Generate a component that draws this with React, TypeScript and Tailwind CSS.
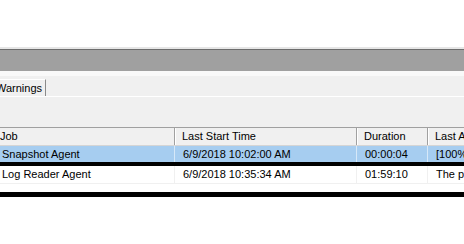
import React from 'react';

const COLS = [
  { label: 'Job', w: 'w-[181px]' },
  { label: 'Last Start Time', w: 'w-[182px]' },
  { label: 'Duration', w: 'w-[71px]' },
  { label: 'Last Action', w: 'w-[120px]' },
];

const ROWS = [
  ['Snapshot Agent', '6/9/2018 10:02:00 AM', '00:00:04', '[100%] A snapshot of 12 article(s) was generated.'],
  ['Log Reader Agent', '6/9/2018 10:35:34 AM', '01:59:10', 'The process is running and is waiting for a response.'],
];

export default function App() {
  return (
    <div className="w-[464px] h-[244px] overflow-hidden bg-white text-[11px] text-black font-['Liberation_Sans',Arial,sans-serif]">
      {/* top pane */}
      <div className="h-[47px] bg-white" />
      <div className="h-[2px] bg-[#e6e6e6]" />
      <div className="h-[1px] bg-[#6d6d6d]" />
      <div className="h-[21px] bg-[#a0a0a0]" />
      <div className="h-[5px] bg-[#f9f9f9]" />

      {/* tab strip */}
      <div className="h-[20px] bg-[#f0f0f0] flex items-end">
        <div className="ml-[-6px] h-[17px] w-[52px] bg-[#f0f0f0] border-t border-l border-white border-r border-r-[#8a8a8a] flex items-center pl-[1px] leading-none">
          Warnings
        </div>
      </div>
      <div className="h-[1px] bg-white" />
      <div className="h-[30px] bg-[#f0f0f0]" />

      {/* grid */}
      <div className="ml-[-6px]">
        <div className="flex h-[19px] bg-[#f0f0f0] border-t border-[#a0a0a0] border-b border-b-[#d5d5d5]">
          {COLS.map((c, i) => (
            <div
              key={c.label}
              className={`${c.w} shrink-0 flex items-center pl-[6px] whitespace-nowrap overflow-hidden border-r border-r-[#a0a0a0] ${i > 0 ? 'border-l border-l-white' : ''}`}
            >
              {c.label}
            </div>
          ))}
        </div>

        <div className="flex h-[16px] bg-[#a6cdf0]">
          {COLS.map((c, i) => (
            <div
              key={c.label}
              className={`${c.w} shrink-0 flex items-center pl-[8px] whitespace-nowrap overflow-hidden ${i < 3 ? 'border-r border-r-[#d6e8f8]' : ''}`}
            >
              {ROWS[0][i]}
            </div>
          ))}
        </div>
        <div className="h-[4px] bg-black" />

        <div className="flex h-[18px] bg-white border-b border-[#f0f0f0]">
          {COLS.map((c, i) => (
            <div
              key={c.label}
              className={`${c.w} shrink-0 flex items-center pl-[8px] whitespace-nowrap overflow-hidden ${i < 3 ? 'border-r border-r-[#f0f0f0]' : ''}`}
            >
              {ROWS[1][i]}
            </div>
          ))}
        </div>
      </div>
      <div className="h-[8px] bg-white" />
      <div className="h-[5px] bg-black" />
    </div>
  );
}
